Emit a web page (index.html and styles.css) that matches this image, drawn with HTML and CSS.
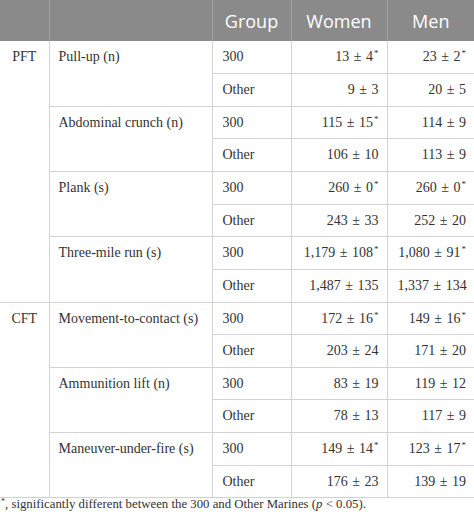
FILE: index.html
```html
<!DOCTYPE html>
<html>
<head>
<meta charset="utf-8">
<link rel="stylesheet" href="styles.css">
</head>
<body>
<table class="data">
  <colgroup>
    <col class="c1"><col class="c2"><col class="c3"><col class="c4"><col class="c5">
  </colgroup>
  <thead>
    <tr>
      <th></th><th></th><th>Group</th><th>Women</th><th>Men</th>
    </tr>
  </thead>
  <tbody>
    <tr><td class="sec" rowspan="8">PFT</td><td class="meas" rowspan="2">Pull-up (n)</td><td>300</td><td class="num">13 ± 4<sup>*</sup></td><td class="num">23 ± 2<sup>*</sup></td></tr>
    <tr><td>Other</td><td class="num">9 ± 3</td><td class="num">20 ± 5</td></tr>
    <tr><td class="meas" rowspan="2">Abdominal crunch (n)</td><td>300</td><td class="num">115 ± 15<sup>*</sup></td><td class="num">114 ± 9</td></tr>
    <tr><td>Other</td><td class="num">106 ± 10</td><td class="num">113 ± 9</td></tr>
    <tr><td class="meas" rowspan="2">Plank (s)</td><td>300</td><td class="num">260 ± 0<sup>*</sup></td><td class="num">260 ± 0<sup>*</sup></td></tr>
    <tr><td>Other</td><td class="num">243 ± 33</td><td class="num">252 ± 20</td></tr>
    <tr><td class="meas" rowspan="2">Three-mile run (s)</td><td>300</td><td class="num">1,179 ± 108<sup>*</sup></td><td class="num">1,080 ± 91<sup>*</sup></td></tr>
    <tr><td>Other</td><td class="num">1,487 ± 135</td><td class="num">1,337 ± 134</td></tr>
    <tr><td class="sec" rowspan="6">CFT</td><td class="meas" rowspan="2">Movement-to-contact (s)</td><td>300</td><td class="num">172 ± 16<sup>*</sup></td><td class="num">149 ± 16<sup>*</sup></td></tr>
    <tr><td>Other</td><td class="num">203 ± 24</td><td class="num">171 ± 20</td></tr>
    <tr><td class="meas" rowspan="2">Ammunition lift (n)</td><td>300</td><td class="num">83 ± 19</td><td class="num">119 ± 12</td></tr>
    <tr><td>Other</td><td class="num">78 ± 13</td><td class="num">117 ± 9</td></tr>
    <tr><td class="meas" rowspan="2">Maneuver-under-fire (s)</td><td>300</td><td class="num">149 ± 14<sup>*</sup></td><td class="num">123 ± 17<sup>*</sup></td></tr>
    <tr><td>Other</td><td class="num">176 ± 23</td><td class="num">139 ± 19</td></tr>
  </tbody>
</table>
<p class="note"><sup>*</sup>, significantly different between the 300 and Other Marines (<i>p</i> &lt; 0.05).</p>
</body>
</html>
```

FILE: styles.css
```css
html, body {
  margin: 0;
  padding: 0;
  background: #ffffff;
}
body {
  width: 474px;
  font-family: "Liberation Serif", "Times New Roman", serif;
  color: #333333;
}
.data {
  width: 474px;
  border-collapse: collapse;
  table-layout: fixed;
  font-size: 14px;
}
.c1 { width: 49px; }
.c2 { width: 163px; }
.c3 { width: 79px; }
.c4 { width: 96px; }
.c5 { width: 87px; }
.data th {
  height: 41px;
  box-sizing: border-box;
  padding: 0 6px;
  background: #8a8a8a;
  color: #ffffff;
  font-family: "Open Sans", "Liberation Sans", sans-serif;
  font-weight: 400;
  font-size: 18px;
  text-align: center;
  vertical-align: middle;
  border-left: 1px solid #a2a2a2;
}
.data th:first-child { border-left: none; }
.data td {
  height: 32.64px;
  box-sizing: border-box;
  padding: 6px 9px 0 10px;
  line-height: 20px;
  vertical-align: top;
  text-align: left;
  border: 1px solid #d2d2d2;
  white-space: nowrap;
}
.data td.sec {
  border-left: none;
  text-align: center;
  padding-left: 0;
  padding-right: 0;
}
.data td.meas { padding-left: 9px; }
.data td.num {
  text-align: right;
  padding-right: 8px;
  word-spacing: 1px;
}
.data tr td:last-child { border-right: none; }
.data tbody tr:first-child td { border-top: none; }
.data sup {
  font-size: 9px;
  line-height: 0;
  vertical-align: 5px;
  margin-left: 1px;
}
.note {
  margin: 0;
  padding: 0 0 0 1px;
  font-size: 12.8px;
  line-height: 13px;
  color: #333333;
}
.note sup {
  font-size: 8px;
  line-height: 0;
  vertical-align: 4px;
}
```
